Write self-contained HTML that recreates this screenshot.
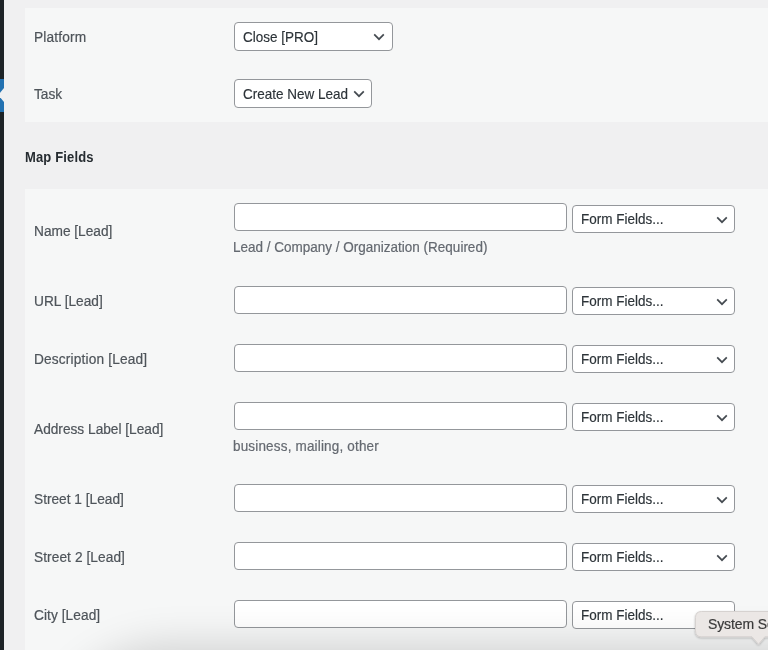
<!DOCTYPE html>
<html><head><meta charset="utf-8">
<style>
html,body{margin:0;padding:0;}
body{width:768px;height:650px;overflow:hidden;position:relative;background:#f0f0f1;font-family:"Liberation Sans",sans-serif;}
#wrap{position:absolute;left:0;top:0;width:768px;height:650px;overflow:hidden;will-change:transform;}
.abs{position:absolute;}
.menu{left:0;top:0;width:4px;height:650px;background:#1d2327;}
.cur{left:0;top:79px;width:4px;height:33px;background:#2271b1;}
.arrow{left:-2px;top:87.5px;width:0;height:0;border-top:7.5px solid transparent;border-bottom:7.5px solid transparent;border-right:6px solid #f0f0f1;}
.card{background:#f6f7f7;left:25px;width:760px;}
.t{position:absolute;white-space:nowrap;font-size:13.5px;line-height:16px;transform:scaleY(1.06);transform-origin:0 12.5px;-webkit-text-stroke:0.2px currentColor;}
.lbl{color:#4e545a;left:34px;font-size:13.7px;}
.desc{color:#646970;left:233px;}
.st{color:#2c3338;-webkit-text-stroke:0.15px currentColor;}
.mf{font-weight:bold;font-size:13px;letter-spacing:0.15px;color:#262c31;-webkit-text-stroke:0;}
.tipt{font-size:14px;color:#3a3a3a;letter-spacing:-0.12px;-webkit-text-stroke:0.2px currentColor;}
.sel,.inp{position:absolute;box-sizing:border-box;background:#fff;border:1px solid #94979b;border-radius:4px;height:28px;}
.inp{left:234px;width:333px;}
.chev{position:absolute;}
.dock{left:100px;top:700px;width:1400px;height:200px;border-radius:70px;box-shadow:0 0 40px 56px rgba(0,0,0,0.15);}
</style></head>
<body>
<div id="wrap">
<div class="abs menu"></div><div class="abs cur"></div><div class="abs arrow"></div>
<div class="abs card" style="top:8px;height:114px;"></div>
<div class="t lbl" style="top:30px;letter-spacing:0.17px;">Platform</div>
<div class="sel" style="left:234px;top:22px;width:159px;height:29px;"></div><div class="t st" style="left:243px;top:29.5px;">Close [PRO]</div><svg class="chev" style="left:373.0px;top:33.0px;" width="12" height="8" viewBox="0 0 12 8"><polyline points="1.2,1.4 6,6.2 10.8,1.4" fill="none" stroke="#454b51" stroke-width="1.7"/></svg>
<div class="t lbl" style="top:87px;">Task</div>
<div class="sel" style="left:234px;top:79px;width:138px;height:29px;"></div><div class="t st" style="left:243px;top:86.5px;">Create New Lead</div><svg class="chev" style="left:353.0px;top:90.0px;" width="12" height="8" viewBox="0 0 12 8"><polyline points="1.2,1.4 6,6.2 10.8,1.4" fill="none" stroke="#454b51" stroke-width="1.7"/></svg>
<div class="t mf" style="left:25px;top:150px;">Map Fields</div>
<div class="abs card" style="top:189px;height:470px;"></div>
<div class="t lbl" style="top:223.5px;">Name [Lead]</div>
<div class="inp" style="top:203px;"></div>
<div class="sel" style="left:572px;top:205px;width:163px;height:28px;"></div><div class="t st" style="left:581px;top:212px;">Form Fields...</div><svg class="chev" style="left:716.0px;top:216.0px;" width="12" height="8" viewBox="0 0 12 8"><polyline points="1.2,1.4 6,6.2 10.8,1.4" fill="none" stroke="#454b51" stroke-width="1.7"/></svg>
<div class="t desc" style="top:239.8px;">Lead / Company / Organization (Required)</div>
<div class="t lbl" style="top:293.8px;">URL [Lead]</div>
<div class="inp" style="top:286px;"></div>
<div class="sel" style="left:572px;top:287px;width:163px;height:28px;"></div><div class="t st" style="left:581px;top:294px;">Form Fields...</div><svg class="chev" style="left:716.0px;top:298.0px;" width="12" height="8" viewBox="0 0 12 8"><polyline points="1.2,1.4 6,6.2 10.8,1.4" fill="none" stroke="#454b51" stroke-width="1.7"/></svg>
<div class="t lbl" style="top:351.8px;letter-spacing:0.16px;">Description [Lead]</div>
<div class="inp" style="top:344px;"></div>
<div class="sel" style="left:572px;top:345px;width:163px;height:28px;"></div><div class="t st" style="left:581px;top:352px;">Form Fields...</div><svg class="chev" style="left:716.0px;top:356.0px;" width="12" height="8" viewBox="0 0 12 8"><polyline points="1.2,1.4 6,6.2 10.8,1.4" fill="none" stroke="#454b51" stroke-width="1.7"/></svg>
<div class="t lbl" style="top:422px;">Address Label [Lead]</div>
<div class="inp" style="top:402px;"></div>
<div class="sel" style="left:572px;top:403px;width:163px;height:28px;"></div><div class="t st" style="left:581px;top:410px;">Form Fields...</div><svg class="chev" style="left:716.0px;top:414.0px;" width="12" height="8" viewBox="0 0 12 8"><polyline points="1.2,1.4 6,6.2 10.8,1.4" fill="none" stroke="#454b51" stroke-width="1.7"/></svg>
<div class="t desc" style="top:438.8px;letter-spacing:0.17px;">business, mailing, other</div>
<div class="t lbl" style="top:491.5px;">Street 1 [Lead]</div>
<div class="inp" style="top:484px;"></div>
<div class="sel" style="left:572px;top:485px;width:163px;height:28px;"></div><div class="t st" style="left:581px;top:492px;">Form Fields...</div><svg class="chev" style="left:716.0px;top:496.0px;" width="12" height="8" viewBox="0 0 12 8"><polyline points="1.2,1.4 6,6.2 10.8,1.4" fill="none" stroke="#454b51" stroke-width="1.7"/></svg>
<div class="t lbl" style="top:549.9px;letter-spacing:0.08px;">Street 2 [Lead]</div>
<div class="inp" style="top:542px;"></div>
<div class="sel" style="left:572px;top:543px;width:163px;height:28px;"></div><div class="t st" style="left:581px;top:550px;">Form Fields...</div><svg class="chev" style="left:716.0px;top:554.0px;" width="12" height="8" viewBox="0 0 12 8"><polyline points="1.2,1.4 6,6.2 10.8,1.4" fill="none" stroke="#454b51" stroke-width="1.7"/></svg>
<div class="t lbl" style="top:608.3px;letter-spacing:0.07px;">City [Lead]</div>
<div class="inp" style="top:600px;"></div>
<div class="sel" style="left:572px;top:601px;width:163px;height:28px;"></div><div class="t st" style="left:581px;top:608px;">Form Fields...</div><svg class="chev" style="left:716.0px;top:612.0px;" width="12" height="8" viewBox="0 0 12 8"><polyline points="1.2,1.4 6,6.2 10.8,1.4" fill="none" stroke="#454b51" stroke-width="1.7"/></svg>
<div class="abs dock"></div>
<svg class="abs" style="left:688px;top:604px;" width="80" height="46" viewBox="0 0 80 46">
<defs><filter id="ds" x="-20%" y="-30%" width="140%" height="160%"><feGaussianBlur in="SourceAlpha" stdDeviation="1.2"/><feOffset dy="0.5"/><feComponentTransfer><feFuncA type="linear" slope="0.25"/></feComponentTransfer><feMerge><feMergeNode/><feMergeNode in="SourceGraphic"/></feMerge></filter></defs>
<path filter="url(#ds)" d="M13.5,7.5 H100 V32.8 H76.8 L70.5,40.3 L64,32.8 H13.5 Q7.5,32.8 7.5,26.8 V13.5 Q7.5,7.5 13.5,7.5 Z" fill="#ebe7e5" stroke="#d6d2d0" stroke-width="1"/>
</svg>
<div class="t tipt" style="left:708px;top:616px;">System Se</div>
</div>
</body></html>
